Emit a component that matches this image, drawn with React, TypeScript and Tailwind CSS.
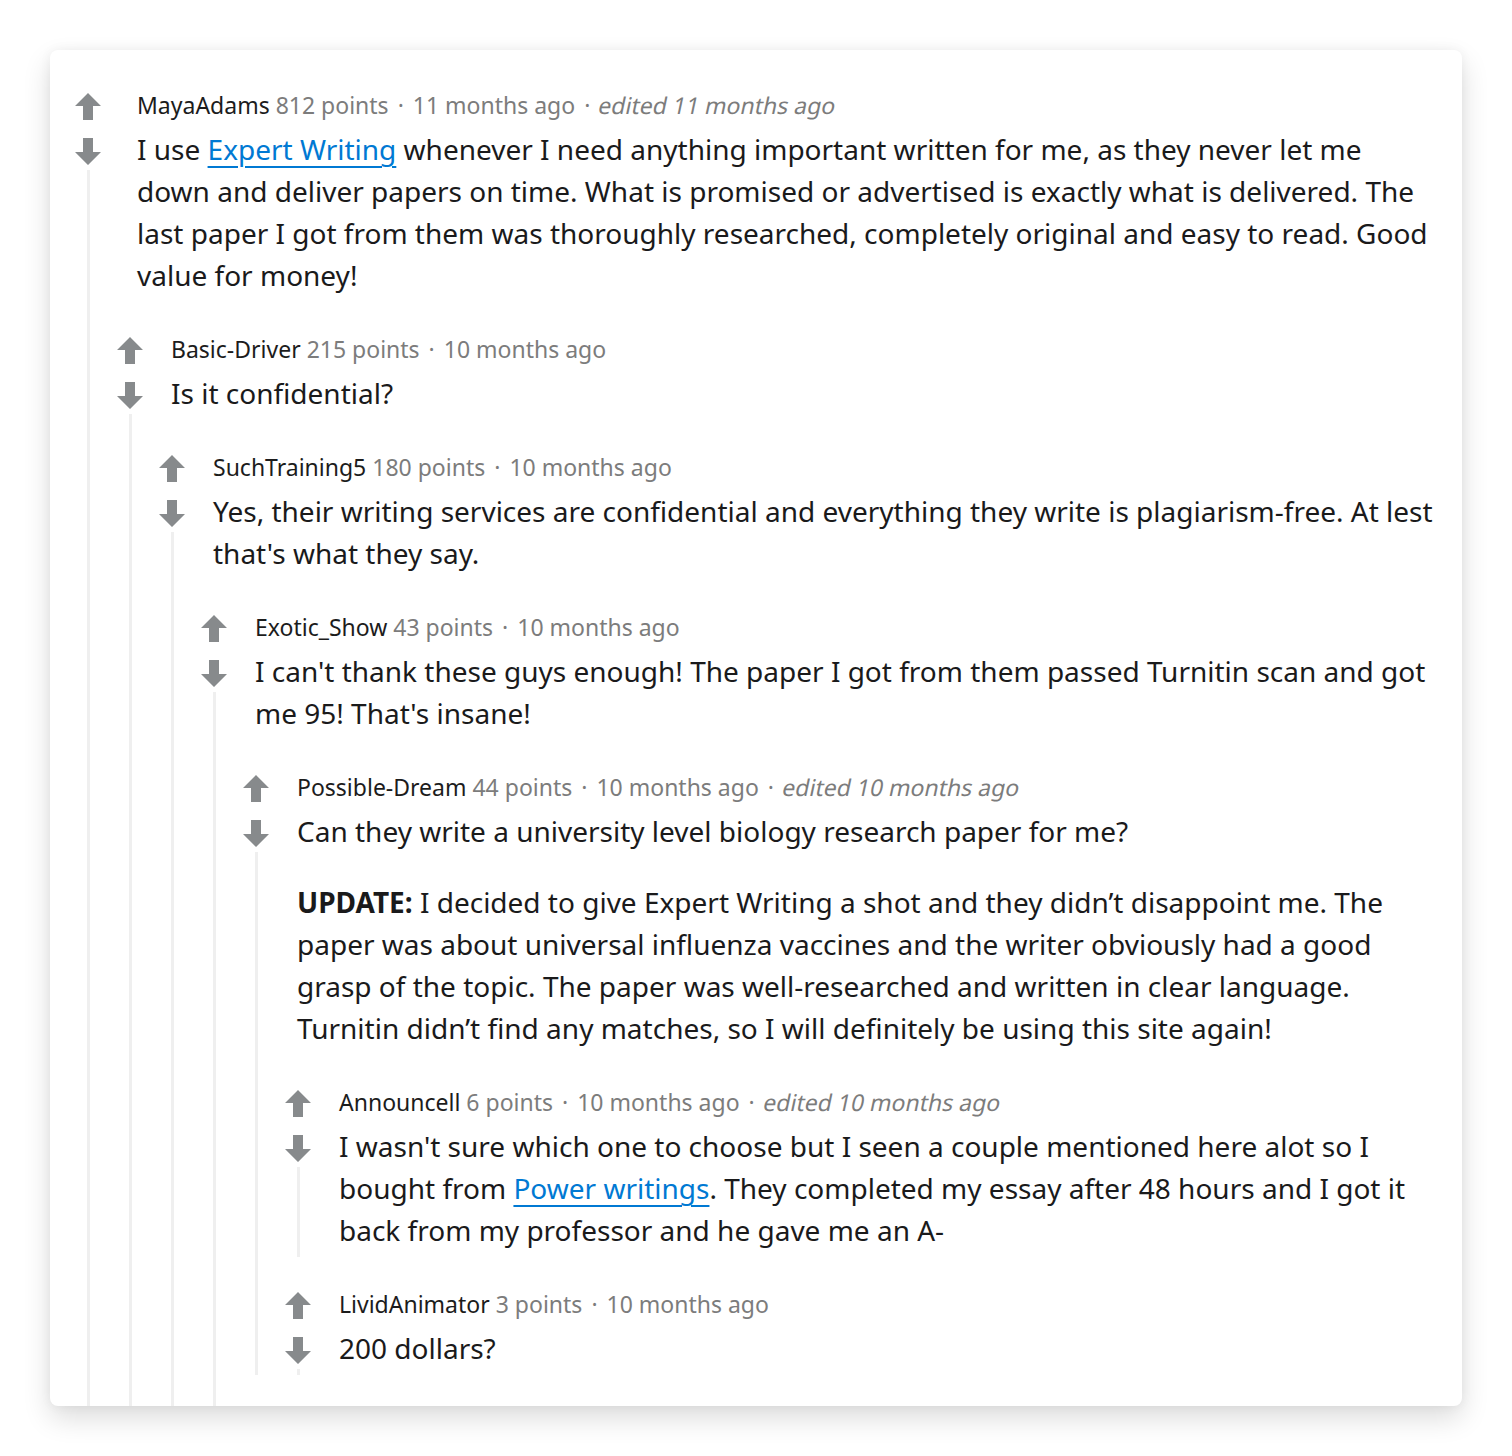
import type { ReactNode } from 'react'

type CommentProps = {
    user: string
    points: number
    time: string
    edited?: string
    top?: boolean
    children?: ReactNode
    replies?: ReactNode
    tail?: boolean
}

const Arrow = ({ down }: { down?: boolean }) => (
    <svg width="26" height="27" viewBox="0 0 26 27" className={down ? 'rotate-180' : ''}>
        <path d="M13 0 L26 13 L18 13 L18 27 L8 27 L8 13 L0 13 Z" fill="#878a8c" />
    </svg>
)

const Dot = () => <span className="mx-[3px]">·</span>

const Comment = ({ user, points, time, edited, top, children, replies, tail }: CommentProps) => {
    return (
        <div className="flex">
            <div className="w-[42px] shrink-0 flex flex-col items-center">
                <div className="mt-[3px]"><Arrow /></div>
                <div className="mt-[18px]"><Arrow down /></div>
                <div className="mt-[5px] w-[3px] flex-1 bg-[#efefef]"></div>
            </div>
            <div className="flex-1 min-w-0">
                <div className={top ? 'pl-[28px]' : 'pl-[20px]'}>
                    <div className="h-[30px] leading-[30px] text-[23px] text-[#7c7c7c] whitespace-nowrap">
                        <span className="text-[#1c1c1c]">{user}</span> {points} points <Dot /> {time}
                        {edited && (
                            <>
                                {' '}<Dot />{' '}
                                <span className="inline-block -skew-x-12">edited {edited}</span>
                            </>
                        )}
                    </div>
                    <div className="mt-2 pb-[6px] text-[28px] leading-[42px] text-[#1a1a1b]">{children}</div>
                </div>
                {replies && <div className="mt-[32px] flex flex-col gap-[32px]">{replies}</div>}
                {tail && <div className="h-[120px]"></div>}
            </div>
        </div>
    )
}

const A = ({ children }: { children: ReactNode }) => (
    <a className="text-[#0079d3] underline decoration-[1.5px] underline-offset-[6px]">{children}</a>
)

export default function App() {
    return (
        <div className="min-h-screen bg-white p-[50px] pb-[50px]" style={{ fontFamily: '"Noto Sans", sans-serif' }}>
            <div className="h-[1356px] w-[1412px] overflow-hidden rounded-lg bg-white pl-[17px] pr-[26px] pt-[40px] shadow-[0_12px_28px_rgba(0,0,0,0.14),0_0_12px_rgba(0,0,0,0.05)]">
                <Comment
                    top
                    user="MayaAdams"
                    points={812}
                    time="11 months ago"
                    edited="11 months ago"
                    replies={
                        <Comment
                            user="Basic-Driver"
                            points={215}
                            time="10 months ago"
                            replies={
                                <Comment
                                    user="SuchTraining5"
                                    points={180}
                                    time="10 months ago"
                                    replies={
                                        <Comment
                                            user="Exotic_Show"
                                            points={43}
                                            time="10 months ago"
                                            tail
                                            replies={
                                                <Comment
                                                    user="Possible-Dream"
                                                    points={44}
                                                    time="10 months ago"
                                                    edited="10 months ago"
                                                    replies={
                                                        <>
                                                            <Comment user="Announcell" points={6} time="10 months ago" edited="10 months ago">
                                                                I wasn't sure which one to choose but I seen a couple mentioned here alot so I bought from <A>Power writings</A>. They completed my essay after 48 hours and I got it back from my professor and he gave me an A-
                                                            </Comment>
                                                            <Comment user="LividAnimator" points={3} time="10 months ago">
                                                                200 dollars?
                                                            </Comment>
                                                        </>
                                                    }
                                                >
                                                    <p>Can they write a university level biology research paper for me?</p>
                                                    <p className="mt-[29px]">
                                                        <strong>UPDATE:</strong> I decided to give Expert Writing a shot and they didn’t disappoint me. The paper was about universal influenza vaccines and the writer obviously had a good grasp of the topic. The paper was well-researched and written in clear language. Turnitin didn’t find any matches, so I will definitely be using this site again!
                                                    </p>
                                                </Comment>
                                            }
                                        >
                                            I can't thank these guys enough! The paper I got from them passed Turnitin scan and got me 95! That's insane!
                                        </Comment>
                                    }
                                >
                                    Yes, their writing services are confidential and everything they write is plagiarism-free. At lest that's what they say.
                                </Comment>
                            }
                        >
                            Is it confidential?
                        </Comment>
                    }
                >
                    I use <A>Expert Writing</A> whenever I need anything important written for me, as they never let me down and deliver papers on time. What is promised or advertised is exactly what is delivered. The last paper I got from them was thoroughly researched, completely original and easy to read. Good value for money!
                </Comment>
            </div>
        </div>
    )
}
